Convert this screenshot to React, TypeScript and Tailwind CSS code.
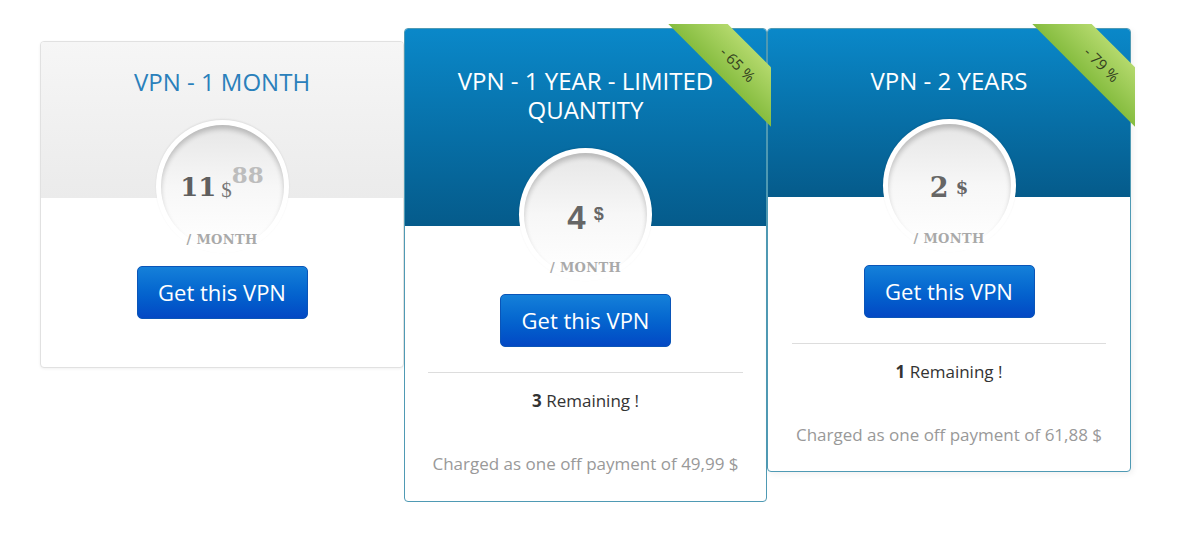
import React from "react";

const sans = { fontFamily: '"Open Sans", "Noto Sans", sans-serif' };

function Ribbon({ text }: { text: string }) {
  return (
    <div className="absolute top-[-5px] right-[-5px] w-[103px] h-[105px] overflow-hidden pointer-events-none z-20">
      <div
        className="absolute left-[-10px] top-[19px] w-[160px] h-[42px] rotate-45 flex items-center justify-center bg-gradient-to-b from-[#b4d96c] to-[#86bd3f] text-[#334020] text-[15px]"
        style={sans}
      >
        {text}
      </div>
    </div>
  );
}

function Circle({ price }: { price: React.ReactNode }) {
  return (
    <div className="relative z-10 -mt-[78px] w-[133px] h-[133px] rounded-full bg-white p-[5px] shadow-[0_-1px_2px_rgba(0,0,0,0.08)]">
      <div className="w-full h-full rounded-full bg-gradient-to-b from-[#e6e6e6] via-[#f7f7f7] to-white shadow-[inset_0_4px_5px_rgba(0,0,0,0.2)] flex flex-col items-center">
        <div className="mt-[47px] h-[30px] flex items-center">{price}</div>
        <div
          className="mt-[30px] h-[16px] leading-[16px] text-[13px] font-bold text-[#a9a9a9] tracking-[0.3px]"
          style={{ fontFamily: '"DejaVu Serif", "Liberation Serif", serif', textShadow: "0 1px 0 #fff" }}
        >
          / MONTH
        </div>
      </div>
    </div>
  );
}

function Button() {
  return (
    <div
      className="mt-[13px] w-[171px] h-[53px] rounded-[5px] bg-gradient-to-b from-[#1580d9] to-[#0448c4] border border-[#0a55b8] text-white text-[22px] flex items-center justify-center"
      style={sans}
    >
      Get this VPN
    </div>
  );
}

const serif = { fontFamily: '"DejaVu Serif", "Liberation Serif", serif' };
const arial = { fontFamily: '"Liberation Sans", Arial, sans-serif' };

export default function App() {
  return (
    <div className="w-[1200px] h-[549px] bg-white flex items-start pl-[40px] pt-[28px]" style={sans}>
      {/* Card 1 */}
      <div className="mt-[13px] w-[364px] rounded-[4px] border border-[#e1e1e1] bg-white shadow-[0_1px_3px_rgba(0,0,0,0.06)] flex flex-col items-center pb-[48px] overflow-hidden">
        <div className="w-full pt-[25px] pb-[102px] bg-gradient-to-b from-[#f6f6f6] to-[#ebebeb] text-center text-[24px] leading-[29px] text-[#2a80bb]">
          VPN - 1 MONTH
        </div>
        <Circle
          price={
            <div className="flex items-start text-[#5f5f5f]" style={serif}>
              <span className="text-[26px] font-bold leading-[30px] mt-[2px]">11</span>
              <span className="text-[21px] leading-[30px] ml-[5px] mt-[5px] text-[#777]" style={{ fontFamily: '"Liberation Serif", serif' }}>$</span>
              <span className="text-[23px] font-bold leading-[22px] text-[#bdbdbd] -mt-[6px]">88</span>
            </div>
          }
        />
        <Button />
      </div>

      {/* Card 2 */}
      <div className="relative w-[363px] rounded-[4px] border border-[#4f9ab4] bg-white flex flex-col items-center pb-[26px]">
        <Ribbon text="- 65 %" />
        <div className="w-full rounded-t-[3px] pt-[37px] pb-[102px] bg-gradient-to-b from-[#0a88c9] to-[#055b8b] text-center text-[24px] leading-[29px] text-white">
          VPN - 1 YEAR - LIMITED
          <br />
          QUANTITY
        </div>
        <Circle
          price={
            <div className="flex items-start text-[#666]" style={arial}>
              <span className="text-[33px] font-bold leading-[30px] mt-[6px]">4</span>
              <span className="text-[18px] font-bold leading-[18px] ml-[8px] mt-[8px]">$</span>
            </div>
          }
        />
        <Button />
        <div className="mt-[25px] w-[315px] border-t border-[#dddddd]" />
        <div className="mt-[16px] text-[17px] leading-[23px] text-[#333]">
          <span className="font-bold">3</span> Remaining !
        </div>
        <div className="mt-[40px] text-[17px] leading-[23px] text-[#999]">
          Charged as one off payment of 49,99 $
        </div>
      </div>

      {/* Card 3 */}
      <div className="relative w-[364px] rounded-[4px] border border-[#4f9ab4] bg-white shadow-[2px_2px_6px_rgba(0,0,0,0.06)] flex flex-col items-center pb-[25px]">
        <Ribbon text="- 79 %" />
        <div className="w-full rounded-t-[3px] pt-[37px] pb-[102px] bg-gradient-to-b from-[#0a88c9] to-[#055b8b] text-center text-[24px] leading-[29px] text-white">
          VPN - 2 YEARS
        </div>
        <Circle
          price={
            <div className="flex items-start text-[#666]" style={serif}>
              <span className="text-[27px] font-bold leading-[30px] mt-[3px]">2</span>
              <span className="text-[18px] font-bold leading-[18px] ml-[7px] mt-[9px]">$</span>
            </div>
          }
        />
        <Button />
        <div className="mt-[25px] w-[314px] border-t border-[#dddddd]" />
        <div className="mt-[16px] text-[17px] leading-[23px] text-[#333]">
          <span className="font-bold">1</span> Remaining !
        </div>
        <div className="mt-[40px] text-[17px] leading-[23px] text-[#999]">
          Charged as one off payment of 61,88 $
        </div>
      </div>
    </div>
  );
}
